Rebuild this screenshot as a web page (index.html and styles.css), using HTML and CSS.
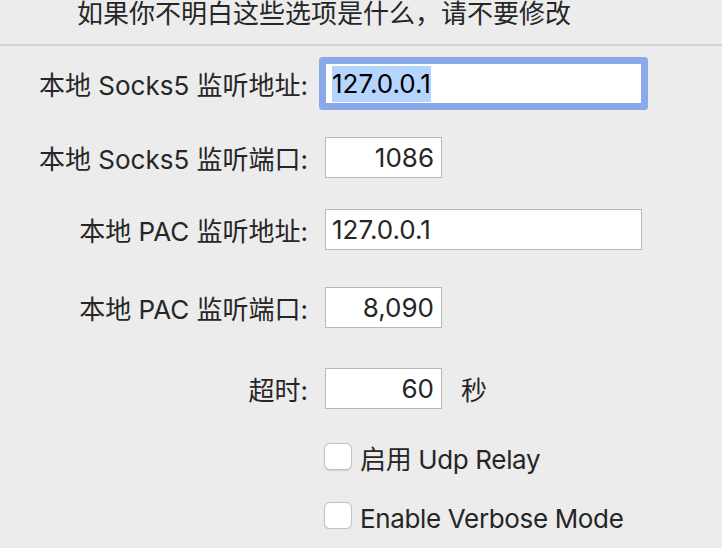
FILE: index.html
```html
<!DOCTYPE html>
<html lang="zh-CN">
<head>
    <meta charset="UTF-8">
    <title>高级设置</title>
    <link rel="stylesheet" href="styles.css">
</head>
<body>
    <div class="header">
        <p class="notice">如果你不明白这些选项是什么，请不要修改</p>
    </div>

    <div class="form">
        <div class="label row-1">本地 Socks5 监听地址:</div>
        <div class="field wide focused row-1"><span class="selected">127.0.0.1</span></div>

        <div class="label row-2">本地 Socks5 监听端口:</div>
        <div class="field narrow num row-2">1086</div>

        <div class="label row-3">本地 PAC 监听地址:</div>
        <div class="field wide row-3">127.0.0.1</div>

        <div class="label row-4">本地 PAC 监听端口:</div>
        <div class="field narrow num row-4">8,090</div>

        <div class="label row-5">超时:</div>
        <div class="inline row-5">
            <div class="field narrow num">60</div>
            <span class="unit">秒</span>
        </div>

        <div class="check row-6">
            <span class="box"></span>
            <span class="check-text">启用 Udp Relay</span>
        </div>

        <div class="check row-7">
            <span class="box"></span>
            <span class="check-text">Enable Verbose Mode</span>
        </div>
    </div>
</body>
</html>
```

FILE: styles.css
```css
body {
    margin: 0;
    background: #ececec;
    color: #262626;
    font-family: Inter, "Noto Sans CJK SC", sans-serif;
    font-size: 26px;
    overflow: hidden;
}

.header {
    height: 44px;
    border-bottom: 2px solid #d3d3d3;
}

.notice {
    margin: 0;
    padding-top: 1px;
    padding-left: 77px;
    line-height: 26px;
}

.form {
    display: grid;
    grid-template-columns: 308px auto;
    column-gap: 17px;
    align-items: center;
}

.label {
    grid-column: 1;
    text-align: right;
    white-space: nowrap;
}

.field {
    grid-column: 2;
    box-sizing: border-box;
    height: 41px;
    line-height: 39px;
    padding: 0 7px 0 6px;
    background: white;
    border: 1px solid #b8b8b8;
    white-space: nowrap;
}

.wide { width: 317px; }
.narrow { width: 117px; }
.num { text-align: right; }

.focused {
    color: #000;
    border-color: #8aa9ea;
    box-shadow: 0 0 0 6px #8aa9ea;
    border-radius: 1px;
}

.selected {
    background: #b4d5fe;
    padding: 2px 0 3px;
}

.inline {
    grid-column: 2;
    display: flex;
    align-items: center;
    gap: 19px;
}

.check {
    grid-column: 2;
    display: flex;
    align-items: center;
    gap: 8px;
    height: 27px;
    line-height: 27px;
    letter-spacing: -0.35px;
}

.check-text {
    padding-top: 6px;
}

.box {
    box-sizing: border-box;
    width: 28px;
    height: 27px;
    margin-left: -1px;
    background: white;
    border: 1px solid #c2c2c2;
    border-radius: 6px;
    box-shadow: 0 0.5px 1px rgba(0,0,0,0.12);
}

.row-1 { margin-top: 17px; }
.row-2 { margin-top: 33px; }
.row-3 { margin-top: 31px; }
.row-4 { margin-top: 37px; }
.row-5 { margin-top: 40px; }
.row-6 { margin-top: 34px; }
.row-7 { margin-top: 32px; }
```
